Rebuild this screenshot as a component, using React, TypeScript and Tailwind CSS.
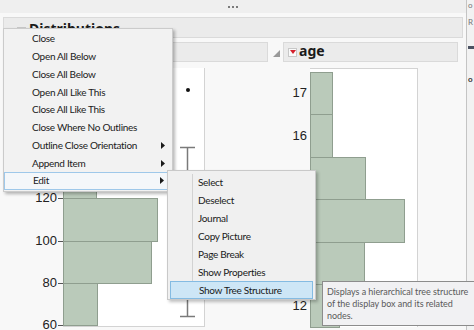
import React from "react";

const mainMenu = [
  { label: "Close" },
  { label: "Open All Below" },
  { label: "Close All Below" },
  { label: "Open All Like This" },
  { label: "Close All Like This" },
  { label: "Close Where No Outlines" },
  { label: "Outline Close Orientation", sub: true },
  { label: "Append Item", sub: true },
  { label: "Edit", sub: true, active: true },
];

const editMenu = [
  "Select",
  "Deselect",
  "Journal",
  "Copy Picture",
  "Page Break",
  "Show Properties",
  "Show Tree Structure",
];

// histogram bars, top to bottom
const heightBars = [
  { h: 43, w: 8 },
  { h: 43, w: 20 },
  { h: 43, w: 34 },
  { h: 43, w: 95 },
  { h: 42, w: 89 },
  { h: 42, w: 35 },
];

const ageBars = [
  { h: 42, w: 23 },
  { h: 43, w: 23 },
  { h: 42, w: 56 },
  { h: 43, w: 95 },
  { h: 42, w: 55 },
  { h: 43, w: 30 },
];

function Arrow() {
  return (
    <svg width="4" height="7" viewBox="0 0 4 7" className="shrink-0">
      <path d="M0 0 L4 3.5 L0 7 Z" fill="#1a1a1a" />
    </svg>
  );
}

function OutlineToggle() {
  return (
    <svg width="7" height="7" viewBox="0 0 7 7" className="shrink-0">
      <path d="M7 0 L7 7 L0 7 Z" fill="#9a9a9a" />
    </svg>
  );
}

function RedTriangle() {
  return (
    <span className="flex h-[9px] w-[9px] shrink-0 items-center justify-center border border-[#c8c8c8] bg-[#fafafa]">
      <svg width="6" height="4" viewBox="0 0 6 4">
        <path d="M0 0 L6 0 L3 4 Z" fill="#d4202c" />
      </svg>
    </span>
  );
}

export default function App() {
  return (
    <div className="relative flex h-[330px] w-[474px] overflow-hidden bg-[#f8f8f8] font-['Lato',sans-serif] text-[#1a1a1a]">
      {/* report */}
      <div className="flex w-[466px] flex-col">
        <div className="flex h-[13px] items-center justify-center gap-[2px] bg-[#efefef] pt-[1px]">
          <span className="h-[2px] w-[2px] rounded-full bg-[#555]" />
          <span className="h-[2px] w-[2px] rounded-full bg-[#555]" />
          <span className="h-[2px] w-[2px] rounded-full bg-[#555]" />
        </div>

        <div className="ml-[3px] mr-[3px] mt-[4px] flex h-[21px] items-end gap-[3px] border border-[#dadada] bg-[#ebebeb] pb-[1px] pl-[3px]">
          <OutlineToggle />
          <RedTriangle />
          <span className="font-['Noto_Sans',sans-serif] text-[14px] font-bold leading-none">Distributions</span>
        </div>

        <div className="mt-[4px] flex h-[20px] items-center">
          <div className="ml-[20px] h-full w-[248px] border border-[#dadada] bg-[#ebebeb]" />
          <div className="ml-[5px] mt-[3px]">
            <OutlineToggle />
          </div>
          <div className="ml-[3px] flex h-full w-[175px] items-center gap-[2px] border border-[#dadada] bg-[#ebebeb] pl-[4px]">
            <RedTriangle />
            <span className="pb-[2px] font-['Noto_Sans',sans-serif] text-[14px] font-bold leading-none">age</span>
          </div>
        </div>

        <div className="mt-[6px] flex">
          {/* height plot */}
          <div className="relative w-[63px] font-['Liberation_Sans',sans-serif] text-[13px] text-[#222]">
            {[
              ["", 1],
              ["", 44],
              ["", 87],
              ["120", 130],
              ["100", 173],
              ["80", 215],
              ["60", 257],
            ].map(([t, y]) => (
              <div
                key={y as number}
                className="absolute right-0 flex h-[16px] items-center gap-[1px]"
                style={{ top: (y as number) - 8 }}
              >
                {t && <span className="leading-[16px]">{t}</span>}
                <span className="h-px w-[5px] bg-[#555]" />
              </div>
            ))}
          </div>
          <div className="relative h-[259px] w-[142px] border-b border-r border-[#d3d3d3] bg-white">
            <div className="flex flex-col pt-px">
              {heightBars.map((b, i) => (
                <div
                  key={i}
                  className="border border-[#8f9e8f] bg-[#bacaba] -mt-px first:mt-0"
                  style={{ height: b.h + 1, width: b.w }}
                />
              ))}
            </div>
            <svg className="absolute left-0 top-0" width="142" height="259">
              <circle cx="125" cy="22" r="2" fill="#111" />
              <line x1="124.5" y1="79" x2="124.5" y2="248" stroke="#7a7a7a" strokeWidth="1.5" />
              <line x1="117" y1="79.5" x2="132" y2="79.5" stroke="#7a7a7a" strokeWidth="1.5" />
              <line x1="117" y1="248.5" x2="132" y2="248.5" stroke="#7a7a7a" strokeWidth="1.5" />
              <rect x="114" y="170" width="21" height="60" fill="#fff" stroke="#7a7a7a" />
            </svg>
          </div>

          {/* age plot */}
          <div className="relative ml-[65px] w-[40px] font-['Liberation_Sans',sans-serif] text-[13px] text-[#222]">
            {[
              ["17", 0],
              ["16", 1],
              ["12", 5],
            ].map(([t, i]) => (
              <span
                key={t as string}
                className="absolute right-[3px] leading-[16px]"
                style={{ top: 25 + (i as number) * 42.5 - 8 }}
              >
                {t}
              </span>
            ))}
          </div>
          <div className="h-[259px] w-[108px] border-r border-t border-[#d3d3d3] bg-white pt-[3px]">
            <div className="flex flex-col">
              {ageBars.map((b, i) => (
                <div
                  key={i}
                  className="border border-[#8f9e8f] bg-[#bacaba] -mt-px first:mt-0"
                  style={{ height: b.h + 1, width: b.w }}
                />
              ))}
            </div>
          </div>
        </div>
      </div>

      {/* neighbouring window edge */}
      <div className="flex w-[8px] flex-col border-l border-[#c4c4c4] bg-[#f2f2f2] pl-[1px] text-[8px] leading-none text-[#777]">
        <span className="mt-[1px]">o</span>
        <span className="mt-[9px]">R</span>
        <span className="mt-[20px] h-[3px] w-full bg-[#4b5262]" />
        <span className="mt-[26px] font-bold text-[#333]">o</span>
      </div>

      {/* context menu */}
      <div className="absolute left-[3px] top-[28px] w-[170px] border border-[#cbcbcb] bg-[#f2f2f2] py-px text-[10px] tracking-[-0.3px] shadow-[2px_2px_3px_rgba(0,0,0,0.28)]">
        {mainMenu.map((m) => (
          <div
            key={m.label}
            className={`flex h-[17.75px] items-center justify-between pl-[28px] pr-[7px] ${
              m.active ? "border border-[#9ec8ea] bg-[#f4f7fa] pl-[27px] pr-[6px]" : ""
            }`}
          >
            <span>{m.label}</span>
            {m.sub && <Arrow />}
          </div>
        ))}
      </div>

      {/* edit submenu */}
      <div className="absolute left-[167px] top-[170px] w-[149px] border border-[#c9c9c9] bg-[#f0f0f0] pt-[2px] text-[10px] tracking-[-0.3px] shadow-[2px_2px_3px_rgba(0,0,0,0.25)]">
        <div className="absolute bottom-[2px] left-[24px] top-[3px] w-px bg-[#d2d2d2]" />
        {editMenu.map((t) => (
          <div
            key={t}
            className={`relative mx-[2px] flex h-[18px] items-center pl-[28px] ${
              t === "Show Tree Structure" ? "border border-[#84bbe2] bg-[#cde6f6] pl-[27px]" : ""
            }`}
          >
            {t}
          </div>
        ))}
      </div>

      {/* tooltip */}
      <div className="absolute left-[322px] top-[281px] h-[45px] w-[160px] whitespace-nowrap border border-[#8c8c8c] bg-[#f1f1f3] px-[4px] pt-[4px] text-[9px] leading-[12px] tracking-[-0.05px] text-[#5a5a5a]">
        Displays a hierarchical tree structure
        <br />
        of the display box and its related
        <br />
        nodes.
      </div>
    </div>
  );
}
